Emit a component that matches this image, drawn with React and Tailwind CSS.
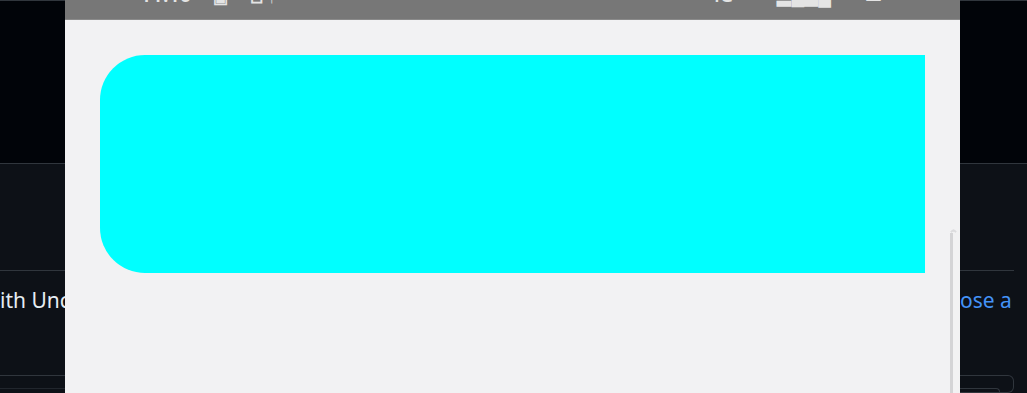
export default function App() {
    return (
        <div
            className="flex w-[1027px] h-[393px] overflow-hidden bg-[#0d1117]"
            style={{ fontFamily: '"Noto Sans", "Open Sans", sans-serif' }}
        >
            {/* left part of the page behind the phone */}
            <div className="w-[65px] shrink-0 flex flex-col overflow-hidden">
                <div className="h-[164px] shrink-0 bg-[#010409] border-t border-b border-[#30363d]" />
                <div className="h-[107px] shrink-0 border-b border-[#30363d]" />
                <div className="h-[104px] shrink-0 pt-[15px] text-[21px] leading-[28px] text-[#e6edf3] whitespace-nowrap">
                    ith Unc
                </div>
                <div className="h-[13px] shrink-0 border-t border-[#30363d]" />
                <div className="flex-1 border-t border-[#21262d]" />
            </div>

            {/* phone screenshot */}
            <div className="relative w-[895px] shrink-0 flex flex-col bg-[#f2f2f3]">
                <div className="h-[20px] shrink-0 bg-[#777777] border-b border-[#8a8a8a] flex items-end justify-between pl-[75px] pr-[78px] overflow-hidden">
                    <div className="flex items-end gap-[22px] translate-y-[-14px] text-[#e4e4e4] text-[20px] leading-none font-semibold">
                        <span>11:10</span>
                        <span className="text-[16px]">▣</span>
                        <span className="text-[16px]">⊡ ↑</span>
                    </div>
                    <div className="flex items-end gap-[34px] translate-y-[-15px] text-[#e4e4e4] text-[18px] leading-none font-semibold">
                        <span>4G+</span>
                        <span>▂▄▆█</span>
                        <span>▭</span>
                    </div>
                </div>
                <div className="flex-1 px-[35px] pt-[35px]">
                    <div className="h-[218px] bg-[#00ffff] rounded-l-[45px]" />
                </div>
                {/* scrollbar */}
                <div className="absolute left-[885px] top-[233px] bottom-0 w-[3px] bg-[#d4d4d6]" />
                <div className="absolute left-[886px] top-[229px] w-[5px] h-[5px] border-t-2 border-l-2 border-[#dcdcde] rounded-tl-[4px] rotate-45" />
            </div>

            {/* right part of the page behind the phone */}
            <div className="w-[67px] shrink-0 flex flex-col overflow-hidden">
                <div className="h-[164px] shrink-0 bg-[#010409] border-t border-b border-[#30363d]" />
                <div className="h-[107px] shrink-0 w-[54px] border-b border-[#30363d]" />
                <div className="h-[104px] shrink-0 pt-[15px] text-[21px] leading-[28px] text-[#4493f8] whitespace-nowrap">
                    ose a
                </div>
                <div className="flex-1 w-[54px] border border-l-0 border-[#30363d] rounded-r-[6px] pt-[12px]">
                    <div className="h-full w-[40px] border border-l-0 border-b-0 border-[#30363d] rounded-tr-[6px]" />
                </div>
            </div>
        </div>
    );
}
